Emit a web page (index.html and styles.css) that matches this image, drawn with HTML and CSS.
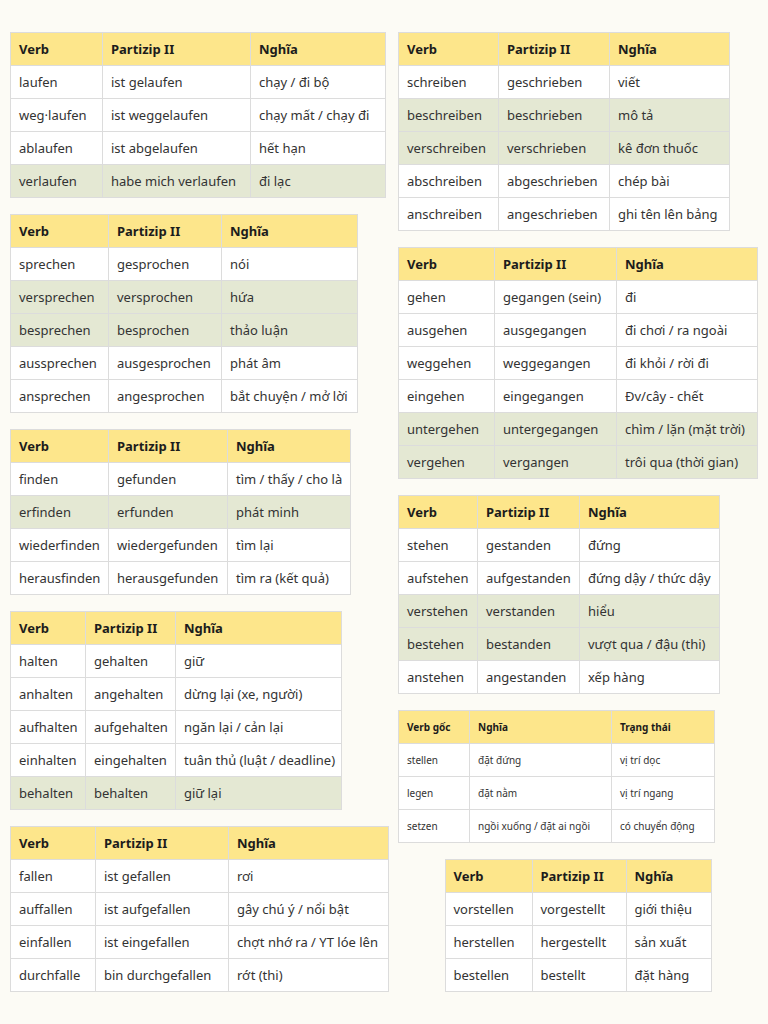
FILE: index.html
```html
<!DOCTYPE html>
<html lang="vi">
<head>
<meta charset="utf-8">
<title>Verben</title>
<link rel="stylesheet" href="styles.css">
</head>
<body>
<div class="page">
  <div class="col col-left">
    <table class="vt l1">
      <colgroup><col class="c1"><col class="c2"><col></colgroup>
      <thead><tr><th>Verb</th><th>Partizip II</th><th>Nghĩa</th></tr></thead>
      <tbody>
        <tr><td>laufen</td><td>ist gelaufen</td><td>chạy / đi bộ</td></tr>
        <tr><td>weg·laufen</td><td>ist weggelaufen</td><td>chạy mất / chạy đi</td></tr>
        <tr><td>ablaufen</td><td>ist abgelaufen</td><td>hết hạn</td></tr>
        <tr class="hl"><td>verlaufen</td><td>habe mich verlaufen</td><td>đi lạc</td></tr>
      </tbody>
    </table>

    <table class="vt l2">
      <colgroup><col class="c1"><col class="c2"><col></colgroup>
      <thead><tr><th>Verb</th><th>Partizip II</th><th>Nghĩa</th></tr></thead>
      <tbody>
        <tr><td>sprechen</td><td>gesprochen</td><td>nói</td></tr>
        <tr class="hl"><td>versprechen</td><td>versprochen</td><td>hứa</td></tr>
        <tr class="hl"><td>besprechen</td><td>besprochen</td><td>thảo luận</td></tr>
        <tr><td>aussprechen</td><td>ausgesprochen</td><td>phát âm</td></tr>
        <tr><td>ansprechen</td><td>angesprochen</td><td>bắt chuyện / mở lời</td></tr>
      </tbody>
    </table>

    <table class="vt l3">
      <colgroup><col class="c1"><col class="c2"><col></colgroup>
      <thead><tr><th>Verb</th><th>Partizip II</th><th>Nghĩa</th></tr></thead>
      <tbody>
        <tr><td>finden</td><td>gefunden</td><td>tìm / thấy / cho là</td></tr>
        <tr class="hl"><td>erfinden</td><td>erfunden</td><td>phát minh</td></tr>
        <tr><td>wiederfinden</td><td>wiedergefunden</td><td>tìm lại</td></tr>
        <tr><td>herausfinden</td><td>herausgefunden</td><td>tìm ra (kết quả)</td></tr>
      </tbody>
    </table>

    <table class="vt l4">
      <colgroup><col class="c1"><col class="c2"><col></colgroup>
      <thead><tr><th>Verb</th><th>Partizip II</th><th>Nghĩa</th></tr></thead>
      <tbody>
        <tr><td>halten</td><td>gehalten</td><td>giữ</td></tr>
        <tr><td>anhalten</td><td>angehalten</td><td>dừng lại (xe, người)</td></tr>
        <tr><td>aufhalten</td><td>aufgehalten</td><td>ngăn lại / cản lại</td></tr>
        <tr><td>einhalten</td><td>eingehalten</td><td>tuân thủ (luật / deadline)</td></tr>
        <tr class="hl"><td>behalten</td><td>behalten</td><td>giữ lại</td></tr>
      </tbody>
    </table>

    <div class="clip">
      <table class="vt l5">
        <colgroup><col class="c1"><col class="c2"><col></colgroup>
        <thead><tr><th>Verb</th><th>Partizip II</th><th>Nghĩa</th></tr></thead>
        <tbody>
          <tr><td>fallen</td><td>ist gefallen</td><td>rơi</td></tr>
          <tr><td>auffallen</td><td>ist aufgefallen</td><td>gây chú ý / nổi bật</td></tr>
          <tr><td>einfallen</td><td>ist eingefallen</td><td>chợt nhớ ra / YT lóe lên</td></tr>
          <tr><td class="brk">durchfallen</td><td>bin durchgefallen</td><td>rớt (thi)</td></tr>
        </tbody>
      </table>
    </div>
  </div>

  <div class="col col-right">
    <table class="vt r1">
      <colgroup><col class="c1"><col class="c2"><col></colgroup>
      <thead><tr><th>Verb</th><th>Partizip II</th><th>Nghĩa</th></tr></thead>
      <tbody>
        <tr><td>schreiben</td><td>geschrieben</td><td>viết</td></tr>
        <tr class="hl"><td>beschreiben</td><td>beschrieben</td><td>mô tả</td></tr>
        <tr class="hl"><td>verschreiben</td><td>verschrieben</td><td>kê đơn thuốc</td></tr>
        <tr><td>abschreiben</td><td>abgeschrieben</td><td>chép bài</td></tr>
        <tr><td>anschreiben</td><td>angeschrieben</td><td>ghi tên lên bảng</td></tr>
      </tbody>
    </table>

    <table class="vt r2">
      <colgroup><col class="c1"><col class="c2"><col></colgroup>
      <thead><tr><th>Verb</th><th>Partizip II</th><th>Nghĩa</th></tr></thead>
      <tbody>
        <tr><td>gehen</td><td>gegangen (sein)</td><td>đi</td></tr>
        <tr><td>ausgehen</td><td>ausgegangen</td><td>đi chơi / ra ngoài</td></tr>
        <tr><td>weggehen</td><td>weggegangen</td><td>đi khỏi / rời đi</td></tr>
        <tr><td>eingehen</td><td>eingegangen</td><td>Đv/cây - chết</td></tr>
        <tr class="hl"><td>untergehen</td><td>untergegangen</td><td>chìm / lặn (mặt trời)</td></tr>
        <tr class="hl"><td>vergehen</td><td>vergangen</td><td>trôi qua (thời gian)</td></tr>
      </tbody>
    </table>

    <table class="vt r3">
      <colgroup><col class="c1"><col class="c2"><col></colgroup>
      <thead><tr><th>Verb</th><th>Partizip II</th><th>Nghĩa</th></tr></thead>
      <tbody>
        <tr><td>stehen</td><td>gestanden</td><td>đứng</td></tr>
        <tr><td>aufstehen</td><td>aufgestanden</td><td>đứng dậy / thức dậy</td></tr>
        <tr class="hl"><td>verstehen</td><td>verstanden</td><td>hiểu</td></tr>
        <tr class="hl"><td>bestehen</td><td>bestanden</td><td>vượt qua / đậu (thi)</td></tr>
        <tr><td>anstehen</td><td>angestanden</td><td>xếp hàng</td></tr>
      </tbody>
    </table>

    <table class="vt r4 small">
      <colgroup><col class="c1"><col class="c2"><col></colgroup>
      <thead><tr><th>Verb gốc</th><th>Nghĩa</th><th>Trạng thái</th></tr></thead>
      <tbody>
        <tr><td>stellen</td><td>đặt đứng</td><td>vị trí dọc</td></tr>
        <tr><td>legen</td><td>đặt nằm</td><td>vị trí ngang</td></tr>
        <tr><td>setzen</td><td>ngồi xuống / đặt ai ngồi</td><td>có chuyển động</td></tr>
      </tbody>
    </table>

    <table class="vt r5">
      <colgroup><col class="c1"><col class="c2"><col></colgroup>
      <thead><tr><th>Verb</th><th>Partizip II</th><th>Nghĩa</th></tr></thead>
      <tbody>
        <tr><td>vorstellen</td><td>vorgestellt</td><td>giới thiệu</td></tr>
        <tr><td>herstellen</td><td>hergestellt</td><td>sản xuất</td></tr>
        <tr><td>bestellen</td><td>bestellt</td><td>đặt hàng</td></tr>
      </tbody>
    </table>
  </div>
</div>
</body>
</html>
```

FILE: styles.css
```css
html, body {
  margin: 0;
  padding: 0;
  background: #fcfbf5;
}

body {
  font-family: "Noto Sans", "Open Sans", sans-serif;
  color: #333;
  height: 1024px;
  overflow: hidden;
}

.page {
  display: flex;
  align-items: flex-start;
  gap: 8px;
  padding: 32px 0 0 10px;
}

.col {
  display: flex;
  flex-direction: column;
  gap: 16px;
}

.col-left {
  width: 380px;
  align-items: flex-start;
}

.col-right {
  width: 360px;
  align-items: flex-start;
}

.vt {
  border-collapse: collapse;
  table-layout: fixed;
  font-size: 13px;
  line-height: 18px;
  background: #fff;
  border: 1px solid #dcdcdc;
}

.vt th,
.vt td {
  border: 1px solid #dcdcdc;
  padding: 7px 8px;
  height: 18px;
  text-align: left;
  vertical-align: top;
  white-space: nowrap;
}

.vt td.brk {
  white-space: normal;
  overflow-wrap: anywhere;
}

.vt th {
  background: #fde68b;
  font-weight: 700;
  color: #1c1c1c;
}

.vt tr.hl td {
  background: #e4e8d3;
}

.vt.small {
  font-size: 10px;
}

.clip {
  height: 166px;
  overflow: hidden;
  border-bottom: 1px solid #dcdcdc;
  box-sizing: border-box;
}

.l1 { width: 376px; }
.l1 .c1 { width: 92px; }
.l1 .c2 { width: 148px; }

.l2 { width: 348px; }
.l2 .c1 { width: 98px; }
.l2 .c2 { width: 113px; }

.l3 { width: 341px; }
.l3 .c1 { width: 98px; }
.l3 .c2 { width: 119px; }

.l4 { width: 332px; }
.l4 .c1 { width: 75px; }
.l4 .c2 { width: 90px; }

.l5 { width: 379px; }
.l5 .c1 { width: 85px; }
.l5 .c2 { width: 133px; }

.r1 { width: 332px; }
.r1 .c1 { width: 100px; }
.r1 .c2 { width: 111px; }

.r2 { width: 360px; }
.r2 .c1 { width: 96px; }
.r2 .c2 { width: 122px; }

.r3 { width: 322px; }
.r3 .c1 { width: 79px; }
.r3 .c2 { width: 102px; }

.r4 { width: 317px; }
.r4 .c1 { width: 71px; }
.r4 .c2 { width: 142px; }

.r5 {
  width: 267px;
  align-self: center;
}
.r5 .c1 { width: 87px; }
.r5 .c2 { width: 94px; }
```
